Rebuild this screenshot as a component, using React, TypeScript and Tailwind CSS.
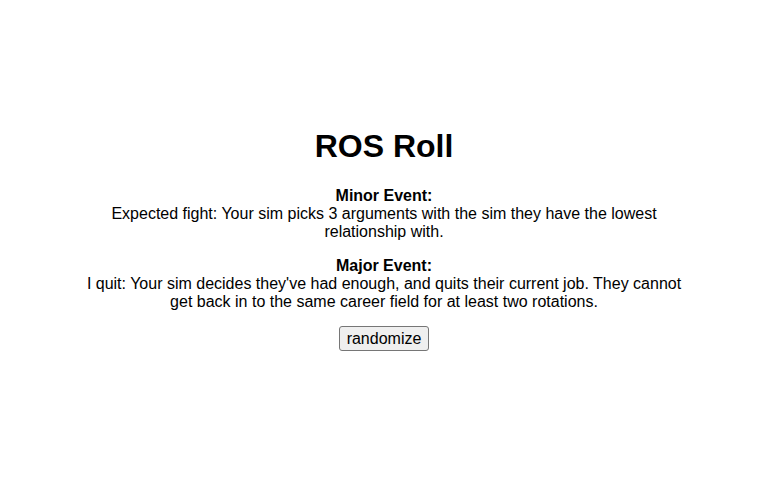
import { useState } from 'react';

const minorEvents = [
	'Expected fight: Your sim picks 3 arguments with the sim they have the lowest relationship with.',
];

const majorEvents = [
	"I quit: Your sim decides they've had enough, and quits their current job. They cannot get back in to the same career field for at least two rotations.",
];

export default function App() {
	const [minor, setMinor] = useState(minorEvents[0]);
	const [major, setMajor] = useState(majorEvents[0]);

	const randomize = () => {
		setMinor(minorEvents[Math.floor(Math.random() * minorEvents.length)]);
		setMajor(majorEvents[Math.floor(Math.random() * majorEvents.length)]);
	};

	return (
		<div className="min-h-screen bg-white text-black font-['Liberation_Sans',Arial,sans-serif] text-[16px] leading-[18px] pt-[107px]">
			<div className="mx-auto max-w-[600px] text-center">
				<h1 className="text-[32px] font-bold leading-[37px] mt-[21px] mb-[22px]">ROS Roll</h1>
				<div className="mb-4">
					<div className="font-bold">Minor Event:</div>
					<div>{minor}</div>
				</div>
				<div className="mb-[15px]">
					<div className="font-bold">Major Event:</div>
					<div>{major}</div>
				</div>
				<div>
					<button
						onClick={randomize}
						className="bg-[#efefef] border border-[#767676] rounded-[3px] px-[6.5px] py-[2px] text-[16px] leading-[19px] text-black"
					>
						randomize
					</button>
				</div>
			</div>
		</div>
	);
}
